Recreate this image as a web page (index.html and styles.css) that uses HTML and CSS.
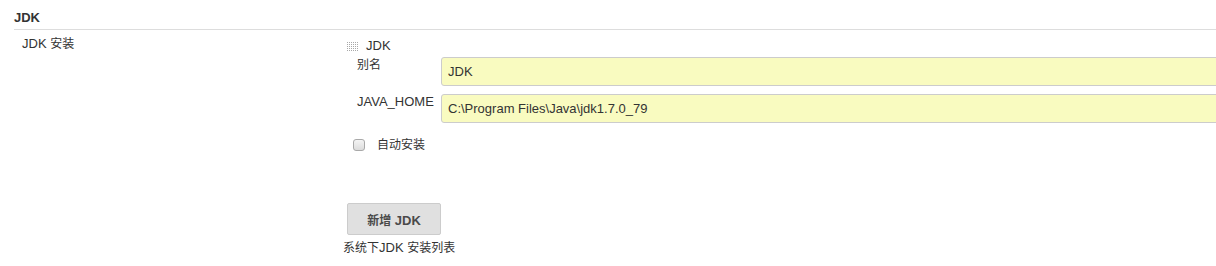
FILE: index.html
```html
<!DOCTYPE html>
<html lang="zh-CN">
<head>
    <meta charset="UTF-8">
    <title>JDK</title>
    <link rel="stylesheet" href="styles.css">
</head>
<body>

<!-- Заголовок секции -->
<div class="section-header">JDK</div>

<div class="setting">
    <div class="setting-name">JDK <span class="cjk">安装</span></div>
    <div class="setting-main">
        <div class="repeated-chunk">
            <div class="chunk-head">
                <span class="grip">
                    <svg width="11" height="10" viewBox="0 0 11 10">
                        <defs>
                            <pattern id="dots" width="2" height="2" patternUnits="userSpaceOnUse">
                                <rect x="0" y="0" width="1" height="1" fill="#a8a8a8"></rect>
                            </pattern>
                        </defs>
                        <rect width="11" height="10" fill="url(#dots)"></rect>
                    </svg>
                </span>
                JDK
            </div>
            <div class="field-row">
                <label class="field-label cjk">别名</label>
                <input class="field-input" type="text" value="JDK">
            </div>
            <div class="field-row">
                <label class="field-label">JAVA_HOME</label>
                <input class="field-input" type="text" value="C:\Program Files\Java\jdk1.7.0_79">
            </div>
            <div class="check-row">
                <input class="check-box" type="checkbox">
                <span class="cjk">自动安装</span>
            </div>
        </div>
        <div class="add-row">
            <button class="add-btn"><span class="cjk">新增</span> JDK</button>
        </div>
        <div class="setting-desc"><span class="cjk">系统下</span>JDK <span class="cjk">安装列表</span></div>
    </div>
</div>

</body>
</html>
```

FILE: styles.css
```css
body {
    font-family: 'Liberation Sans', Arial, 'Noto Sans CJK SC', sans-serif;
    font-size: 13px;
    line-height: 16px;
    color: #333;
    background: #fff;
    margin: 0;
    overflow: hidden;
}
.cjk {
    font-size: 12px;
}
.section-header {
    margin-left: 14px;
    padding: 10px 0 3px;
    font-weight: bold;
    border-bottom: 1px solid #ddd;
}
.setting {
    display: grid;
    grid-template-columns: 343px 1fr;
    margin-top: 6px;
}
.setting-name {
    padding-left: 22px;
}
.setting-main {
    padding-top: 2px;
}
.chunk-head {
    display: flex;
    align-items: center;
    height: 16px;
    padding-left: 4px;
    margin-bottom: 3px;
}
.grip {
    display: inline-flex;
    width: 11px;
    height: 10px;
    margin-right: 8px;
    margin-top: 1px;
}
.field-row {
    display: grid;
    grid-template-columns: 84px 1fr;
    margin-left: 14px;
    margin-right: -40px;
    margin-bottom: 8px;
}
.field-label {
    padding-top: 0;
}
.field-input {
    height: 29px;
    box-sizing: border-box;
    padding: 0 6px;
    font-family: inherit;
    font-size: 13px;
    color: #333;
    background: #f9fbc0;
    border: 1px solid #ccc;
    border-radius: 3px;
    outline: none;
}
.check-row {
    display: flex;
    align-items: center;
    height: 16px;
    margin-top: 14px;
    padding-left: 10px;
}
.check-box {
    appearance: none;
    -webkit-appearance: none;
    width: 12px;
    height: 12px;
    margin: 0 12px 0 0;
    box-sizing: border-box;
    border: 1px solid #a9a9a9;
    border-radius: 3px;
    background: linear-gradient(#f4f4f4, #dcdcdc);
}
.add-row {
    margin-top: 50px;
    padding-left: 4px;
}
.add-btn {
    width: 94px;
    height: 32px;
    font-family: inherit;
    font-size: 13px;
    font-weight: bold;
    color: #4a4a4a;
    background: #e0e0e0;
    border: 1px solid #ccc;
    border-radius: 2px;
    cursor: pointer;
}
.setting-desc {
    margin-top: 5px;
}
```
